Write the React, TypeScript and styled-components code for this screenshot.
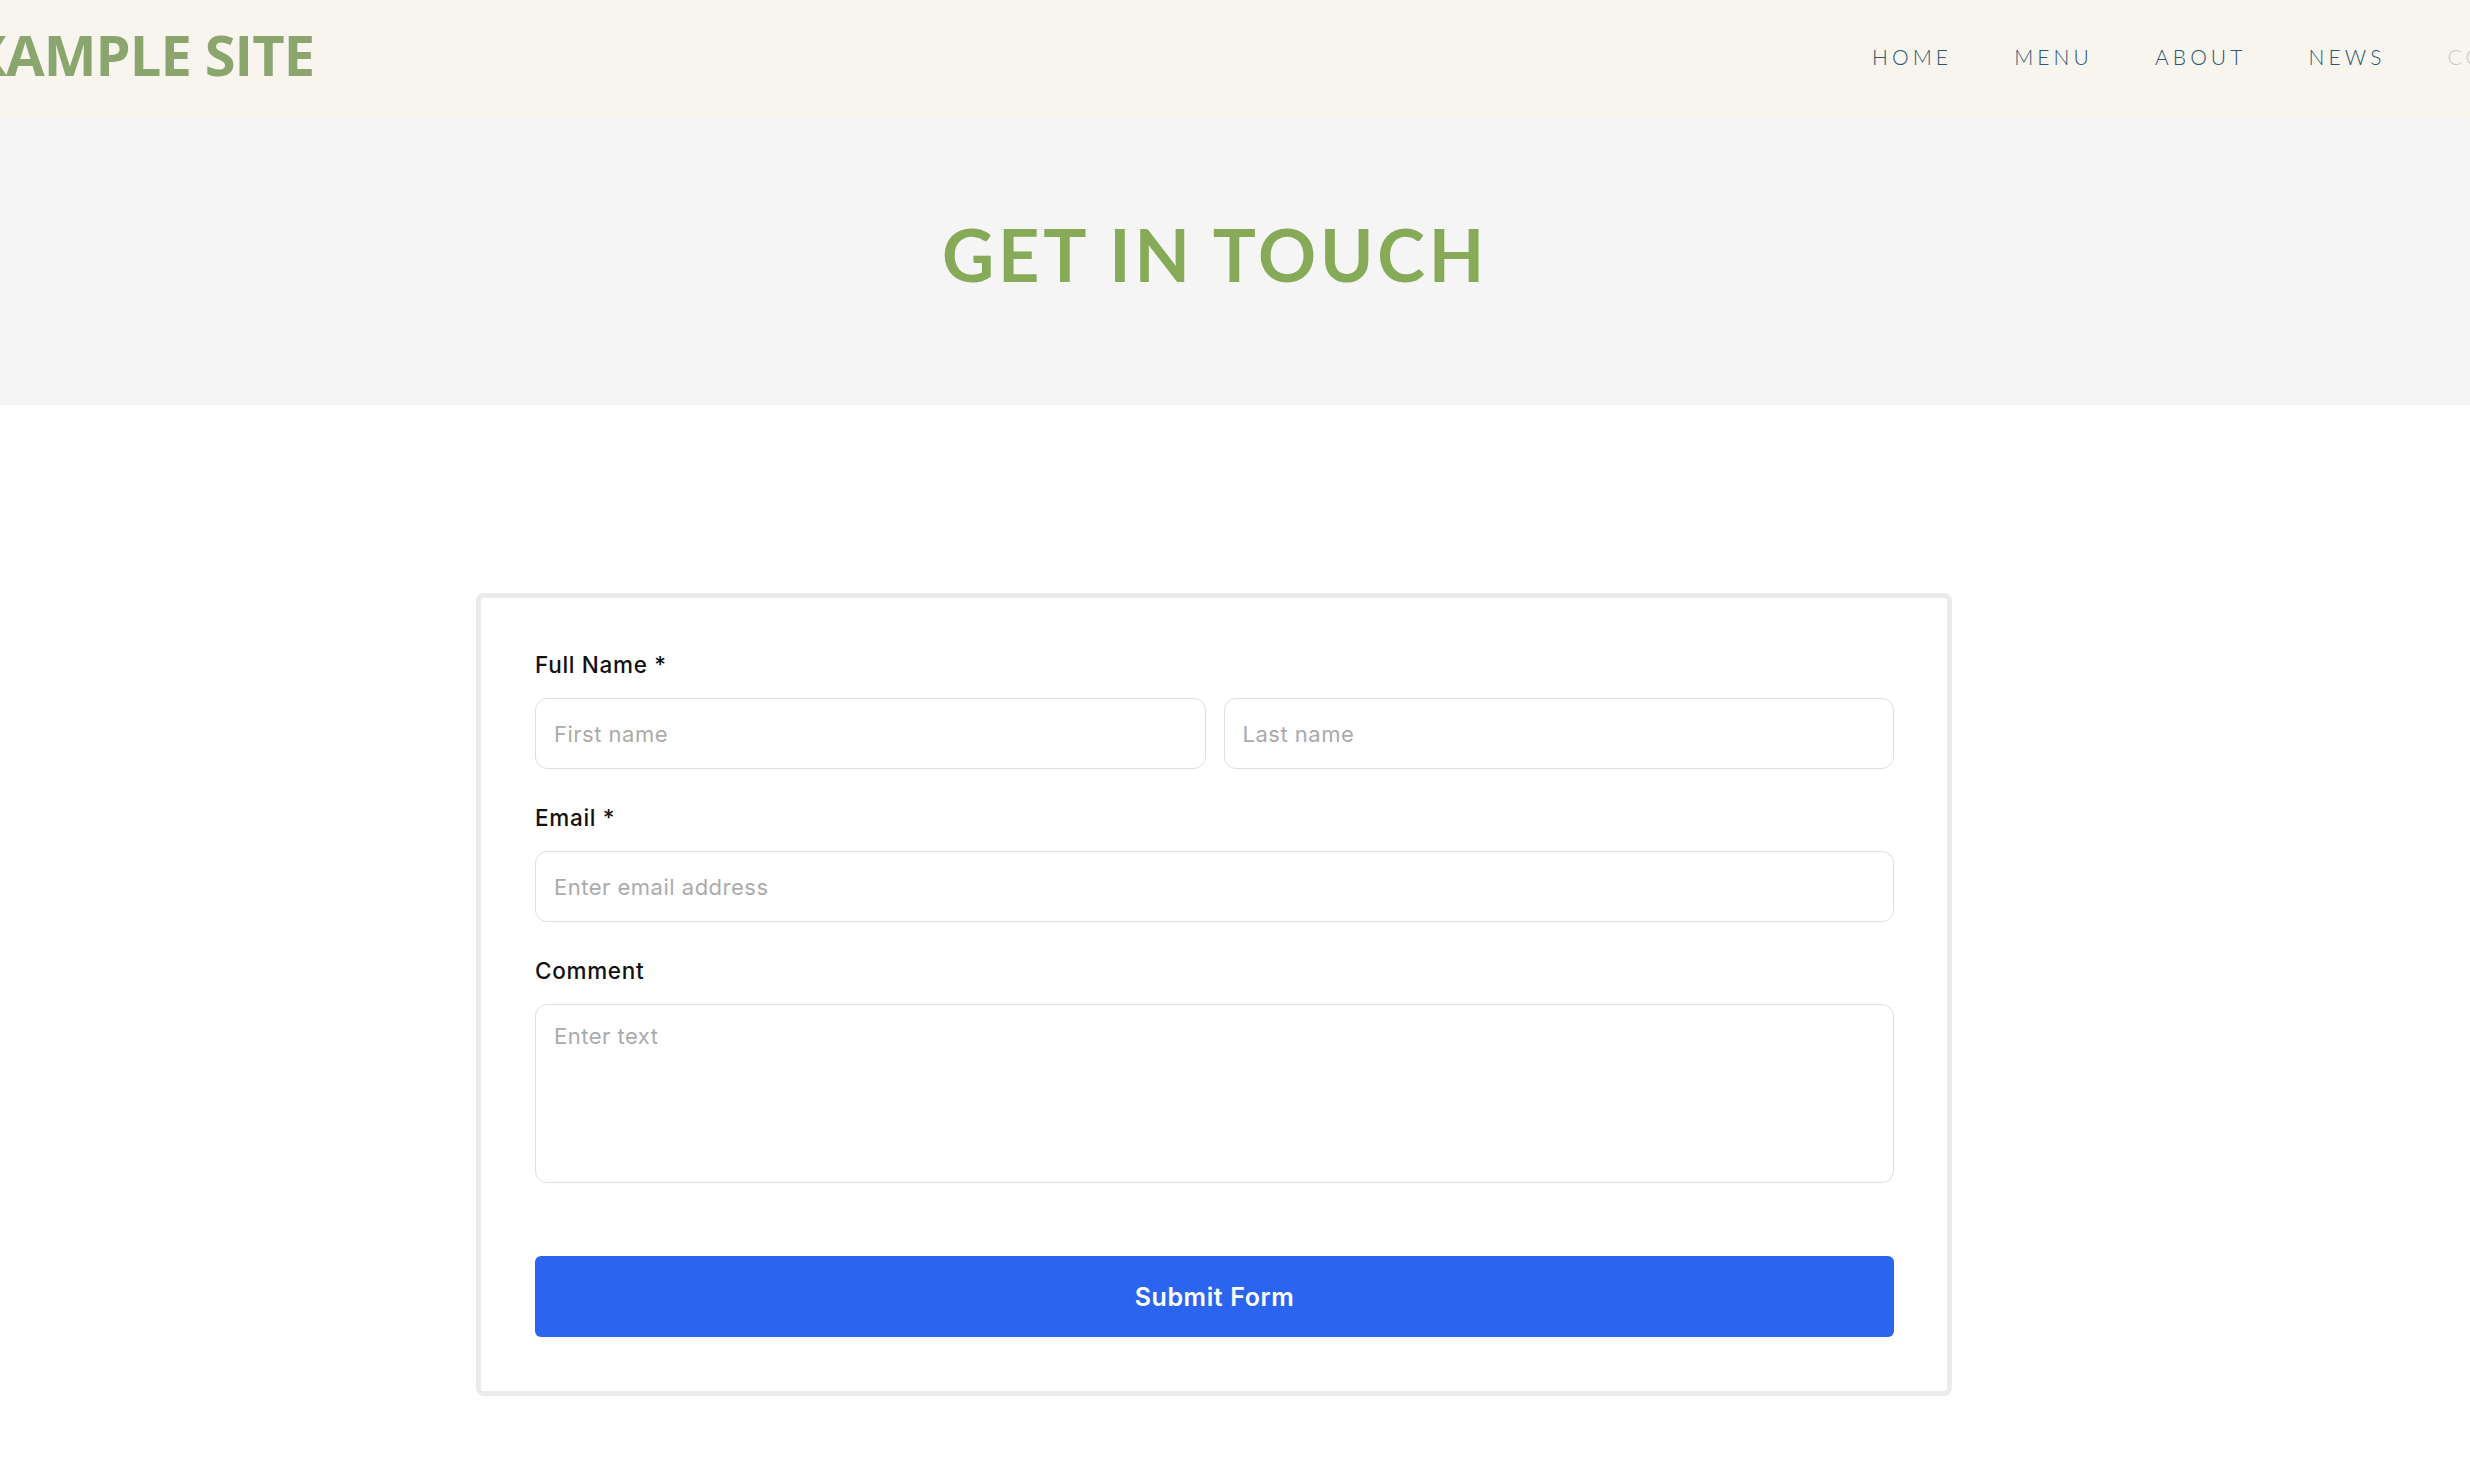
import React from "react";
import styled, { createGlobalStyle } from "styled-components";

const GlobalStyle = createGlobalStyle`
  html, body {
    margin: 0;
    padding: 0;
    background: #ffffff;
    overflow-x: hidden;
  }
  * { box-sizing: border-box; }
`;

const Page = styled.div`
  width: 100%;
  min-height: 1472px;
  background: #ffffff;
  font-family: "Inter", "Noto Sans", sans-serif;
`;

const Header = styled.header`
  height: 118px;
  background: #f8f5ee;
  display: flex;
  align-items: center;
  white-space: nowrap;
  overflow: hidden;
`;

const Brand = styled.div`
  flex: 0 0 1872px;
  padding-bottom: 10px;
`;

const BrandText = styled.span`
  display: inline-block;
  margin-left: -61px;
  font-family: "Open Sans", "Liberation Sans", sans-serif;
  font-weight: 700;
  font-size: 56px;
  line-height: 1;
  color: #8aa66e;
  letter-spacing: -0.9px;
`;

const Nav = styled.nav`
  display: flex;
  gap: 62px;
  padding-bottom: 5px;
`;

const NavLink = styled.a<{ $muted?: boolean }>`
  font-family: "Lato", "Open Sans", sans-serif;
  font-weight: 300;
  font-size: 21px;
  letter-spacing: 4.1px;
  text-transform: uppercase;
  color: ${(p) => (p.$muted ? "#cbc9c2" : "#2c5772")};
  text-decoration: none;
`;

const Hero = styled.section`
  height: 287px;
  background: #f4f5f4;
  display: flex;
  align-items: center;
  justify-content: center;
  padding: 0 40px 16px 0;
`;

const Title = styled.h1`
  margin: 0;
  font-family: "Lato", "Open Sans", sans-serif;
  font-weight: 700;
  font-size: 72px;
  letter-spacing: 3.8px;
  color: #87aa58;
  line-height: 1;
`;

const Main = styled.main`
  display: flex;
  justify-content: center;
  padding: 188px 42px 80px 0;
`;

const Card = styled.form`
  width: 1476px;
  border: 5px solid #ebebeb;
  border-radius: 8px;
  background: #ffffff;
  padding: 52px 53px 54px 54px;
  display: flex;
  flex-direction: column;
`;

const Field = styled.div<{ $last?: boolean }>`
  display: flex;
  flex-direction: column;
  gap: 18px;
  margin-bottom: ${(p) => (p.$last ? "73px" : "34px")};
`;

const Label = styled.label`
  font-family: "Inter", "Noto Sans", sans-serif;
  font-weight: 500;
  font-size: 22.5px;
  letter-spacing: 0.7px;
  line-height: 30px;
  color: #111111;
`;

const Row = styled.div`
  display: grid;
  grid-template-columns: 1fr 1fr;
  gap: 18px;
`;

const fieldText = `
  font-family: "Inter", "Noto Sans", sans-serif;
  font-size: 22px;
  letter-spacing: 0.5px;
  color: #222;
  background: #fff;
  border: 1px solid #dedede;
  border-radius: 12px;
  outline: none;
  width: 100%;
  &::placeholder { color: #ababab; }
`;

const Input = styled.input`
  ${fieldText}
  height: 71px;
  padding: 0 18px;
`;

const TextArea = styled.textarea`
  ${fieldText}
  height: 179px;
  padding: 16px 18px;
  line-height: 1.4;
  resize: none;
`;

const SubmitButton = styled.button`
  height: 81px;
  width: 100%;
  border: none;
  border-radius: 6px;
  background: #2b65ef;
  color: #ffffff;
  font-family: "Inter", "Noto Sans", sans-serif;
  font-weight: 600;
  font-size: 25px;
  letter-spacing: 0.6px;
  cursor: pointer;
`;

export default function App() {
  return (
    <Page>
      <GlobalStyle />
      <Header>
        <Brand>
          <BrandText>EXAMPLE SITE</BrandText>
        </Brand>
        <Nav>
          <NavLink href="#">Home</NavLink>
          <NavLink href="#">Menu</NavLink>
          <NavLink href="#">About</NavLink>
          <NavLink href="#">News</NavLink>
          <NavLink href="#" $muted>Contact</NavLink>
        </Nav>
      </Header>
      <Hero>
        <Title>GET IN TOUCH</Title>
      </Hero>
      <Main>
        <Card onSubmit={(e) => e.preventDefault()}>
          <Field>
            <Label>Full Name *</Label>
            <Row>
              <Input placeholder="First name" />
              <Input placeholder="Last name" />
            </Row>
          </Field>
          <Field>
            <Label>Email *</Label>
            <Input placeholder="Enter email address" />
          </Field>
          <Field $last>
            <Label>Comment</Label>
            <TextArea placeholder="Enter text" />
          </Field>
          <SubmitButton type="submit">Submit Form</SubmitButton>
        </Card>
      </Main>
    </Page>
  );
}
